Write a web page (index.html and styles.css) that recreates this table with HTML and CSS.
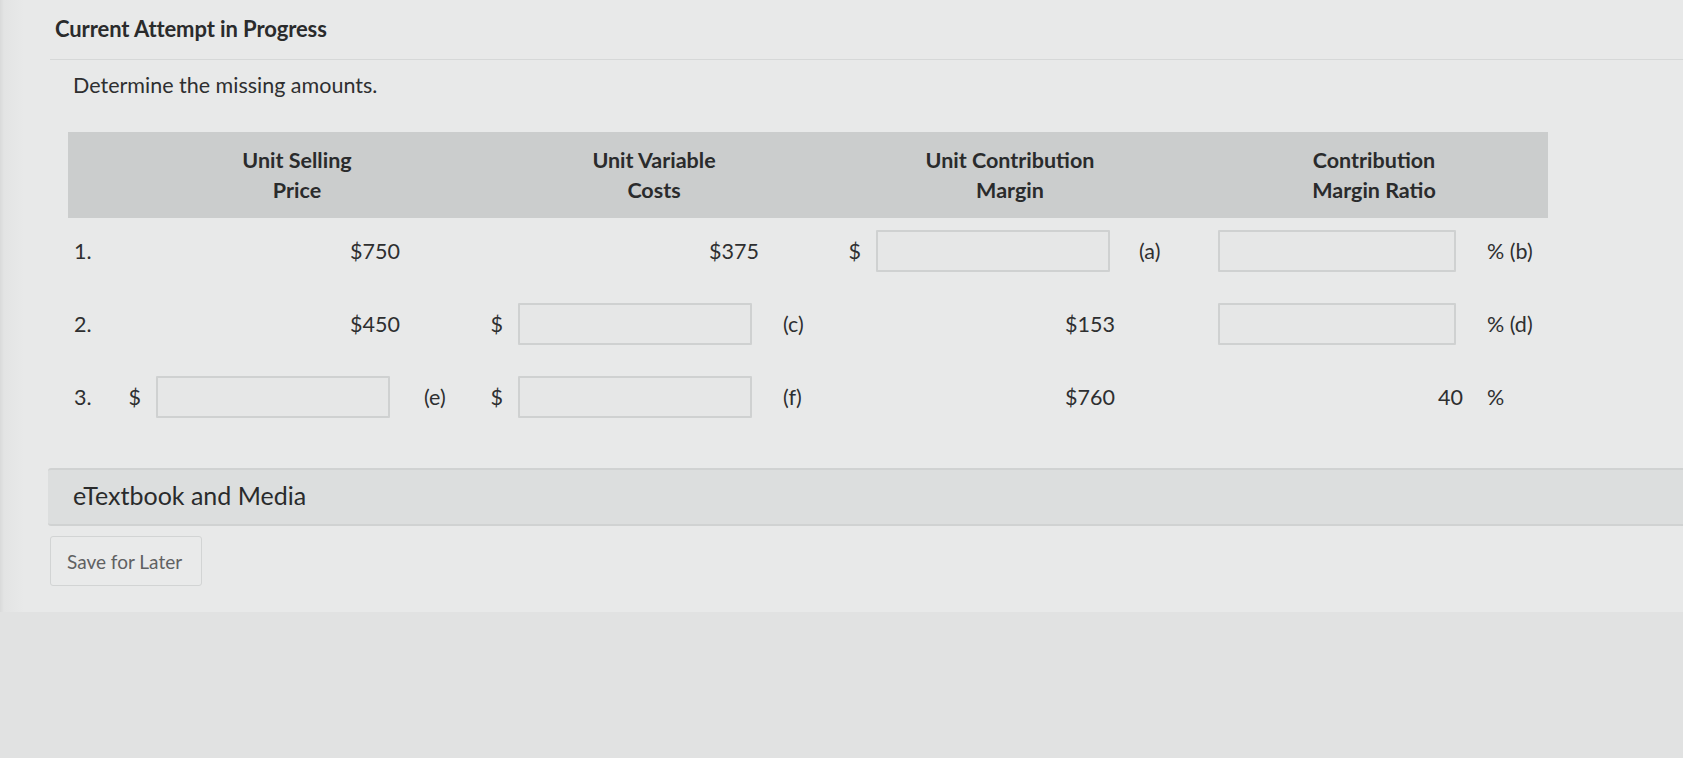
FILE: index.html
```html
<!DOCTYPE html>
<html lang="en">
<head>
<meta charset="utf-8">
<title>Current Attempt in Progress</title>
<link rel="stylesheet" href="styles.css">
</head>
<body>
<div class="page">
  <h1 class="attempt">Current Attempt in Progress</h1>
  <section class="question">
    <p class="prompt">Determine the missing amounts.</p>
    <div class="table">
      <div class="thead">
        <div class="th th-num"></div>
        <div class="th">Unit Selling<br>Price</div>
        <div class="th">Unit Variable<br>Costs</div>
        <div class="th">Unit Contribution<br>Margin</div>
        <div class="th th-gap"></div>
        <div class="th">Contribution<br>Margin Ratio</div>
      </div>

      <div class="row">
        <div class="num">1.</div>
        <div class="dol"></div>
        <div class="val">$750</div>
        <div class="lab"></div>
        <div class="dol"></div>
        <div class="val">$375</div>
        <div class="lab"></div>
        <div class="dol">$</div>
        <div class="val"><input class="field" type="text" aria-label="(a)"></div>
        <div class="lab">(a)</div>
        <div class="val"><input class="field wide" type="text" aria-label="(b)"></div>
        <div class="lab">% (b)</div>
      </div>

      <div class="row">
        <div class="num">2.</div>
        <div class="dol"></div>
        <div class="val">$450</div>
        <div class="lab"></div>
        <div class="dol">$</div>
        <div class="val"><input class="field" type="text" aria-label="(c)"></div>
        <div class="lab">(c)</div>
        <div class="dol"></div>
        <div class="val">$153</div>
        <div class="lab"></div>
        <div class="val"><input class="field wide" type="text" aria-label="(d)"></div>
        <div class="lab">% (d)</div>
      </div>

      <div class="row">
        <div class="num">3.</div>
        <div class="dol">$</div>
        <div class="val"><input class="field" type="text" aria-label="(e)"></div>
        <div class="lab">(e)</div>
        <div class="dol">$</div>
        <div class="val"><input class="field" type="text" aria-label="(f)"></div>
        <div class="lab">(f)</div>
        <div class="dol"></div>
        <div class="val">$760</div>
        <div class="lab"></div>
        <div class="val">40</div>
        <div class="lab">%</div>
      </div>
    </div>
  </section>

  <div class="media-bar">eTextbook and Media</div>
  <div class="actions">
    <button class="save" type="button">Save for Later</button>
  </div>
  <div class="bottom-band"></div>
</div>
</body>
</html>
```

FILE: styles.css
```css
* { box-sizing: border-box; }

html, body {
  margin: 0;
  padding: 0;
  height: 100%;
}

body {
  background: #e7e8e8;
  font-family: Lato, "Open Sans", "Liberation Sans", sans-serif;
  color: #2e2f30;
  overflow: hidden;
}

.page {
  position: relative;
  height: 758px;
  background: linear-gradient(to right, #d9dada 0px, #e3e4e4 4px, #e8e9e9 24px);
}

.attempt {
  margin: 0;
  padding: 15px 0 0 55px;
  height: 59px;
  font-size: 22px;
  font-weight: 700;
  color: #2a2b2c;
  letter-spacing: -0.1px;
}

.question {
  margin-left: 50px;
  border-top: 1px solid #d6d8d8;
  padding-left: 18px;
}

.prompt {
  margin: 0;
  padding: 12px 0 0 5px;
  height: 72px;
  font-size: 21.5px;
  color: #2e2f30;
}

.table {
  width: 1480px;
}

.thead {
  display: grid;
  grid-template-columns: 54px 350px 364px 348px 16px 348px;
  background: #cbcdcd;
  height: 86px;
  align-items: center;
}

.th {
  text-align: center;
  font-weight: 700;
  font-size: 21.5px;
  line-height: 30px;
  color: #2a2b2c;
}

.row {
  display: grid;
  grid-template-columns: 54px 34px 244px 80px 38px 241px 81px 36px 239px 103px 245px auto;
  height: 43px;
  align-items: center;
  font-size: 21.5px;
  color: #2e2f30;
}

.thead + .row {
  margin-top: 11px;
}

.row + .row {
  margin-top: 30px;
}

.num {
  padding-left: 6px;
}

.dol {
  text-align: right;
  padding-right: 15px;
}

.val {
  text-align: right;
  display: flex;
  justify-content: flex-end;
  align-items: center;
}

.val .field {
  margin-right: auto;
}

.lab {
  padding-left: 24px;
  white-space: nowrap;
}

.field {
  width: 234px;
  height: 42px;
  border: 2px solid #cfd1d1;
  background: #e6e7e7;
  border-radius: 1px;
  font: inherit;
  padding: 0 8px;
  outline: none;
}

.field.wide {
  width: 238px;
}

.media-bar {
  margin: 50px 0 0 48px;
  height: 58px;
  background: #dcdede;
  border-top: 2px solid #d0d2d2;
  border-bottom: 2px solid #d0d2d2;
  border-radius: 3px 0 0 3px;
  padding: 10px 0 0 25px;
  font-size: 25px;
  color: #2a2b2c;
}

.actions {
  padding: 10px 0 0 50px;
}

.save {
  width: 152px;
  height: 50px;
  background: #e9eaea;
  border: 1px solid #d2d4d4;
  border-radius: 3px;
  font-family: Lato, "Open Sans", "Liberation Sans", sans-serif;
  font-size: 19px;
  color: #5f6162;
  text-align: left;
  padding: 0 0 0 16px;
}

.bottom-band {
  margin-top: 26px;
  height: 150px;
  background: #e1e2e2;
}
```
